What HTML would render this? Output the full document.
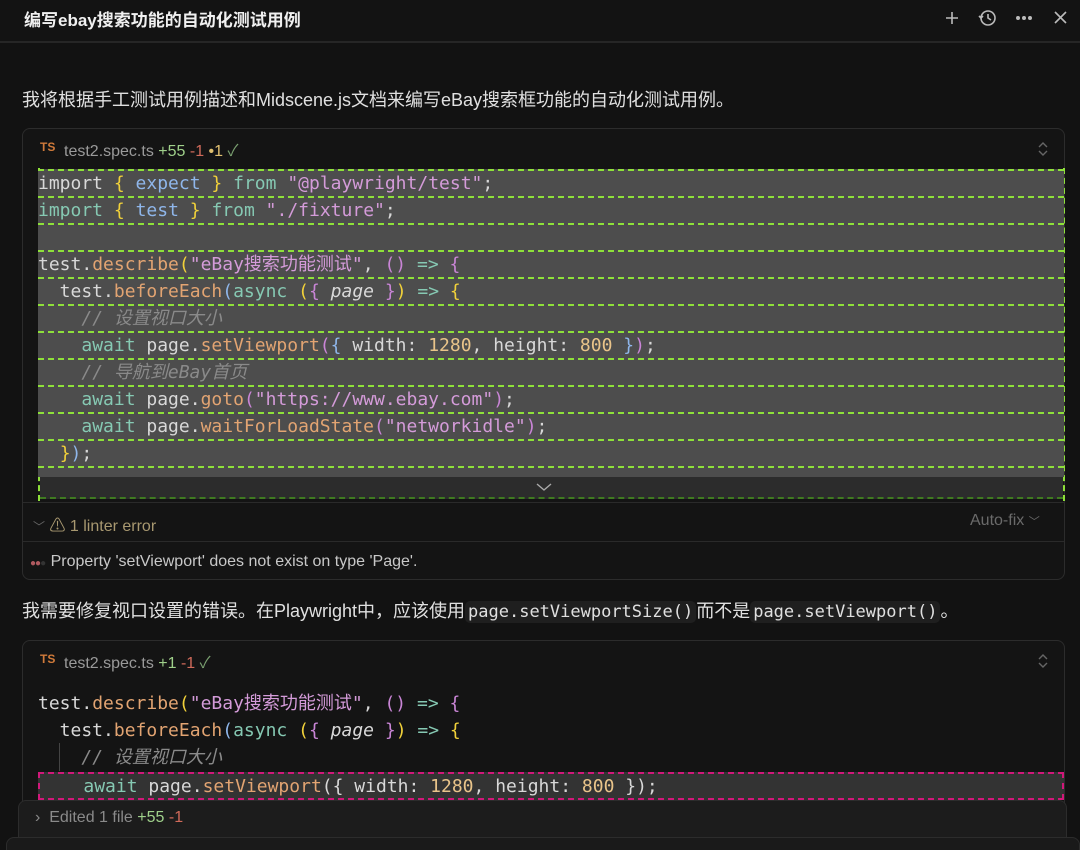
<!DOCTYPE html>
<html style="width:1080px;height:850px;overflow:hidden"><head><meta charset="utf-8"><style>
*{margin:0;padding:0;box-sizing:border-box}
body{width:1080px;height:850px;background:#121212;color:#d6d6d6;font-family:"Liberation Sans","Noto Sans CJK SC",sans-serif;position:relative;overflow:hidden}
.abs{position:absolute}
.mono{font-family:"DejaVu Sans Mono","Liberation Mono","Noto Sans CJK SC",monospace}
.card{position:absolute;border:1px solid #2c2c2c;border-radius:8px;background:#141414}
.row{position:absolute;left:38px;width:1026px;height:27px;background:#4d4d4d;border-top:2px dashed #8ee03a;font-size:18px;line-height:25px;white-space:pre;color:#d8d8d8}
.row2{position:absolute;left:38px;height:27px;font-size:18px;line-height:27px;white-space:pre;color:#d8d8d8}
.k{color:#86c9b3}.y{color:#f1d13a}.b{color:#8fb6ea}.s{color:#d49bd9}.m{color:#e2a472}.n{color:#e9c48a}.c{color:#8a8a8a;font-style:italic}.p{color:#c985d6}
.g{color:#9fd08a}.r{color:#d06a5a}
code{font-family:"DejaVu Sans Mono",monospace;background:#1f1f1f;border-radius:5px;padding:1px 3px;font-size:17px}
</style></head><body>
<div class="abs" style="left:75px;top:28px;font-size:16px;color:#555;height:16px;overflow:hidden;line-height:16px">的输入一分类选择和搜索结果展示等功能</div>
<div class="abs" style="left:0;top:0;width:1080px;height:43px;background:#131313;border-bottom:2px solid #262626"></div>
<div class="abs" style="left:24px;top:6px;font-size:17px;font-weight:bold;color:#f0f0f0">编写ebay搜索功能的自动化测试用例</div>
<svg class="abs" style="left:938px;top:6px" width="136" height="24" viewBox="0 0 136 24" fill="none" stroke="#bbb" stroke-width="1.6">
<path d="M14 6v12M8 12h12"/>
<circle cx="50" cy="12" r="7"/><path d="M50 8v4l3 2"/><path d="M41 10l2 2 2-2"/>
<circle cx="80" cy="12" r="1.2" fill="#bbb"/><circle cx="86" cy="12" r="1.2" fill="#bbb"/><circle cx="92" cy="12" r="1.2" fill="#bbb"/>
<path d="M117 6l11 11M128 6l-11 11"/></svg>
<div class="abs" style="left:22px;top:86px;font-size:18px;color:#e0e0e0">我将根据手工测试用例描述和Midscene.js文档来编写eBay搜索框功能的自动化测试用例。</div>

<div class="card" style="left:22px;top:128px;width:1043px;height:452px"></div>
<div class="abs" style="left:40px;top:140px;font-size:12px;font-weight:bold;color:#d07a3a">TS</div>
<div class="abs" style="left:64px;top:137px;font-size:16px;color:#9a9a9a">test2.spec.ts <span class="g">+55</span> <span class="r">-1</span> <span style="color:#e0c070">•1</span> <span style="color:#7aa070">✓</span></div>
<svg class="abs" style="left:1036px;top:140px" width="14" height="18" fill="none" stroke="#666" stroke-width="1.4"><path d="M3 7l4-4 4 4M3 11l4 4 4-4"/></svg>

<div class="abs" style="left:38px;top:168px;width:1027px;height:333px;border-left:2px dashed #8ee03a;border-right:2px dashed #8ee03a"></div>
<div class="row mono" style="top:169px">import <span class="y">{</span> <span class="b">expect</span> <span class="y">}</span> <span class="k">from</span> <span class="s">"@playwright/test"</span>;</div>
<div class="row mono" style="top:196px"><span class="k">import</span> <span class="y">{</span> <span class="b">test</span> <span class="y">}</span> <span class="k">from</span> <span class="s">"./fixture"</span>;</div>
<div class="row mono" style="top:223px"> </div>
<div class="row mono" style="top:250px">test.<span class="m">describe</span><span class="y">(</span><span class="s">"eBay搜索功能测试"</span>, <span class="p">()</span> <span class="k">=&gt;</span> <span class="p">{</span></div>
<div class="row mono" style="top:277px">  test.<span class="m">beforeEach</span><span class="b">(</span><span class="k">async</span> <span class="y">(</span><span class="p">{</span> <i>page</i> <span class="p">}</span><span class="y">)</span> <span class="k">=&gt;</span> <span class="y">{</span></div>
<div class="row mono" style="top:304px">    <span class="c">// 设置视口大小</span></div>
<div class="row mono" style="top:331px">    <span class="k">await</span> page.<span class="m">setViewport</span><span class="p">(</span><span class="b">{</span> width: <span class="n">1280</span>, height: <span class="n">800</span> <span class="b">}</span><span class="p">)</span>;</div>
<div class="row mono" style="top:358px">    <span class="c">// 导航到eBay首页</span></div>
<div class="row mono" style="top:385px">    <span class="k">await</span> page.<span class="m">goto</span><span class="p">(</span><span class="s">"https://www.ebay.com"</span><span class="p">)</span>;</div>
<div class="row mono" style="top:412px">    <span class="k">await</span> page.<span class="m">waitForLoadState</span><span class="p">(</span><span class="s">"networkidle"</span><span class="p">)</span>;</div>
<div class="row mono" style="top:439px">  <span class="y">}</span><span class="b">)</span>;</div>
<div class="row mono" style="top:466px;height:11px;border-bottom:0"></div>
<div class="abs" style="left:40px;top:477px;width:1023px;height:22px;background:#2c2c2c;border-bottom:2px dashed #3f7a20"></div>
<svg class="abs" style="left:535px;top:481px" width="18" height="12" fill="none" stroke="#aaa" stroke-width="1.4"><path d="M2 3l7 6 7-6"/></svg>
<div class="abs" style="left:23px;top:502px;width:1041px;border-top:1px solid #2a2a2a"></div>
<div class="abs" style="left:33px;top:512px;font-size:16px;color:#a89870"><span style="color:#666;font-size:12px">﹀</span> ⚠ 1 linter error</div>
<div class="abs" style="left:970px;top:512px;font-size:16px;color:#6a6a6a">Auto-fix <span style="font-size:11px">﹀</span></div>
<div class="abs" style="left:23px;top:541px;width:1041px;border-top:1px solid #2a2a2a"></div>
<div class="abs" style="left:30px;top:553px;font-size:16px;color:#c8c8c8"><span style="color:#b05a60;font-size:10px;letter-spacing:-1px">●●</span><span style="color:#333;font-size:10px">●</span> Property 'setViewport' does not exist on type 'Page'.</div>

<div class="abs" style="left:22px;top:597px;font-size:18px;color:#e0e0e0">我需要修复视口设置的错误。在Playwright中，应该使用<code>page.setViewportSize()</code>而不是<code>page.setViewport()</code>。</div>

<div class="card" style="left:22px;top:640px;width:1043px;height:230px"></div>
<div class="abs" style="left:40px;top:652px;font-size:12px;font-weight:bold;color:#d07a3a">TS</div>
<div class="abs" style="left:64px;top:649px;font-size:16px;color:#9a9a9a">test2.spec.ts <span class="g">+1</span> <span class="r">-1</span> <span style="color:#7aa070">✓</span></div>
<svg class="abs" style="left:1036px;top:652px" width="14" height="18" fill="none" stroke="#666" stroke-width="1.4"><path d="M3 7l4-4 4 4M3 11l4 4 4-4"/></svg>
<div class="row2 mono" style="top:690px">test.<span class="m">describe</span><span class="y">(</span><span class="s">"eBay搜索功能测试"</span>, <span class="p">()</span> <span class="k">=&gt;</span> <span class="p">{</span></div>
<div class="row2 mono" style="top:717px">  test.<span class="m">beforeEach</span><span class="b">(</span><span class="k">async</span> <span class="y">(</span><span class="p">{</span> <i>page</i> <span class="p">}</span><span class="y">)</span> <span class="k">=&gt;</span> <span class="y">{</span></div>
<div class="abs" style="left:59px;top:743px;width:1px;height:28px;background:#444"></div>
<div class="row2 mono" style="top:744px">    <span class="c">// 设置视口大小</span></div>
<div class="abs mono" style="left:38px;top:772px;width:1026px;height:28px;background:#333;border:2px dashed #d0187a;font-size:18px;line-height:26px;white-space:pre;color:#d8d8d8">    <span class="k">await</span> page.<span class="m">setViewport</span>({ width: <span class="n">1280</span>, height: <span class="n">800</span> });</div>

<div class="abs" style="left:18px;top:800px;width:1049px;height:60px;background:#1c1c1c;border:1px solid #2c2c2c;border-radius:8px"></div>
<div class="abs" style="left:35px;top:809px;font-size:16px;color:#8a8a8a">›&nbsp; Edited 1 file <span class="g">+55</span> <span class="r">-1</span></div>
<div class="abs" style="left:6px;top:837px;width:1074px;height:30px;background:#1a1a1a;border:1px solid #2c2c2c;border-radius:8px"></div>
</body></html>
